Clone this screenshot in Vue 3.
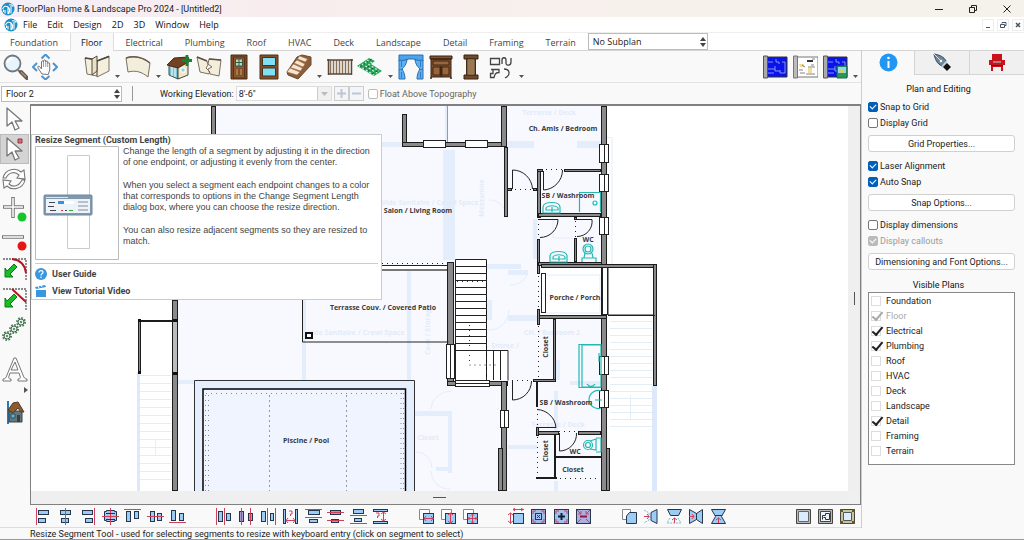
<script setup>
import { ref } from 'vue'

const menus = ['File', 'Edit', 'Design', '2D', '3D', 'Window', 'Help']
const tabs = ['Foundation', 'Floor', 'Electrical', 'Plumbing', 'Roof', 'HVAC', 'Deck', 'Landscape', 'Detail', 'Framing', 'Terrain']
const activeTab = ref('Floor')

const plans = ref([
  { name: 'Foundation', on: false },
  { name: 'Floor', on: true, disabled: true },
  { name: 'Electrical', on: true },
  { name: 'Plumbing', on: true },
  { name: 'Roof', on: false },
  { name: 'HVAC', on: false },
  { name: 'Deck', on: false },
  { name: 'Landscape', on: false },
  { name: 'Detail', on: true },
  { name: 'Framing', on: false },
  { name: 'Terrain', on: false },
])

const logo = '<circle cx="7" cy="7" r="6.5" fill="#1a8fc9"/><path d="M1.500 7C3 4 5 3.500 7 5S9 9 7.500 12M4 11.500V8M7 4.500v7.500M10 4v7.500M2.500 10V7.500M8 3c2-.8 3.500 0 4 1.500" fill="none" stroke="#fff" stroke-width="1.100"/>'

const sheet = '<path d="M4 3h21v20H4z" fill="#0a14e8" stroke="#333"/><path d="M1.500 2h4v22h-4z" fill="#aaa" stroke="#555"/>'
const sheetLines = '<path d="M6 8h5m3-3v3h3M6 15h7m0-3v5h5m-12 2h6m5-11v2m3-2h3v11h-5v-3" fill="none" stroke="#9db2ff" stroke-width=".8"/>'

const tools = [
  { n: 'Zoom', i: '<path d="M16 16l3 3" stroke="#777" stroke-width="2"/><path d="M19 18l6 6" stroke="#66594b" stroke-width="4" stroke-linecap="round"/><path d="M19 18l5 5" stroke="#a58f75" stroke-width="1.500"/><circle cx="10.500" cy="9.500" r="8" fill="#e8f4fd" stroke="#6e7880" stroke-width="1.800"/><path d="M5.500 9a5 5 0 0 1 5-4.500" stroke="#fff" stroke-width="2" fill="none"/>' },
  { n: 'Pan', i: '<path d="M9.500 4.500l4-4 4 4M9.500 22l4 3.500 4-3.500M5 9l-4 4 4 4M21 9l4 4-4 4" fill="none" stroke="#4f93cf" stroke-width="2"/><path d="M10 20l-4-6c-1-2 1-2.500 2-1l1.500 2V8c0-1.500 2-1.500 2 0V7c0-1.500 2.200-1.500 2.200 0v1c0-1.300 2-1.300 2 0v1.500c.5-1.300 2-1 2 .5v6l-1.500 4.500z" fill="#fff" stroke="#777"/><path d="M11.500 8v5m2.200-5v5m2-4v4" stroke="#888" stroke-width=".8"/>' },
  { gap: true },
  { n: 'Wall', arrow: true, i: '<path d="M1 4l12 2v16L3 20zM13 7l12-5v15l-12 6z" fill="#f5f0de" stroke="#7d7060"/><path d="M8 5l5-3v15l-5 4z" fill="#e8e0c8" stroke="#56483a"/><path d="M1 4l7 1M13 7l12-4.500" stroke="#4e4438" stroke-width="1.500"/>' },
  { n: 'Curved wall', arrow: true, i: '<path d="M1 4c9-3 18 0 24 5l-2 14c-6-5-12-7-20-5z" fill="#f3eedc" stroke="#7d7060"/><path d="M1 4c9-3 18 0 24 5" fill="none" stroke="#6a5c4e" stroke-width="1.500"/>' },
  { n: 'Room', i: '<path d="M3 11l9 2v12l-9-4z" fill="#7cc3d3" stroke="#355"/><path d="M12 13l10-5v13l-10 4z" fill="#f1e6c6" stroke="#444"/><path d="M1 11L8 4l14-1 2 4-12 7z" fill="#744222" stroke="#4e2810"/><path d="M6 13v9m3-8v9m6-9h4v4h-4z" fill="#8ed1e0" stroke="#fff"/><path d="M21 1v11M15.500 6.500h11" stroke="#138433" stroke-width="2.800"/>' },
  { n: 'Break wall', i: '<path d="M1 3l10 4 1 4-2 3 4 4-1 2L4 18zM13 5l12 1-2 16-9-2-2-5 4-2-4-3z" fill="#f3eedc" stroke="#7d7060"/><path d="M1 3l10 4m2-2l12 1" stroke="#5e5145" stroke-width="1.500"/>' },
  { n: 'Door', i: '<path d="M5 1h16v24H5z" fill="#7d4a25" stroke="#4a2a14"/><path d="M7.500 3h11v21h-11z" fill="#8d5930" stroke="#55331b"/><path d="M9.500 5h7v7h-7z" fill="#9bdceb" stroke="#453"/><path d="M13 5v7M9.500 8.500h7" stroke="#453"/><path d="M10 14.500h2v7h-2zM14 14.500h2v7h-2z" fill="#c99663" stroke="#5e3a1f" stroke-width=".6"/>' },
  { n: 'Window', i: '<path d="M4 1h18v24H4z" fill="#80502a" stroke="#4f2f18"/><path d="M6.500 3.500h13v8h-13zM6.500 14h13v8h-13z" fill="#7fdff5" stroke="#47301c"/>' },
  { n: 'Stairs', arrow: true, i: '<path d="M1 18L11 3l5-2 9 2v8L12 25 2 21z" fill="#8b5d38" stroke="#6b4a31"/><path d="M1 18l10 3 3-3-10-4zM4.500 13.500l10 3.500 2-3-9-4zM8 9l9 4 2-3-8-4zM11.500 5l8 3 2-3-8-3z" fill="#f8e4cf" stroke="#9a7250" stroke-width=".6"/>' },
  { n: 'Railing', i: '<path d="M3.500 6v14m3-14v14m3-14v14m3-14v14m3-14v14m3-14v14m3-14v14" stroke="#8a7257" stroke-width="1.500"/><path d="M0 6h26M1 20h24" stroke="#5a4939" stroke-width="1.500"/><path d="M1.500 5v16m23-16v16" stroke="#5a4939" stroke-width="1.500"/>' },
  { n: 'Deck', arrow: true, i: '<path d="M0 12L12 4l6 3-4 3 11 7-8 5z" fill="#27a45a"/><path d="M2 12l15 9M5 10l15 9M8 8l14 9M10 6l5 3" stroke="#d4f7df" stroke-width="1.200" stroke-dasharray="2 2"/><path d="M3 13l12-8m-8 10l7-4m-3 6l7-4m-3 7l7-4" stroke="#075d2e" stroke-dasharray="2 2"/>' },
  { n: 'Curtains', i: '<path d="M1 1h24v6c-4 2-7 1-9-2h-6c-2 3-5 4-9 2z" fill="#4aa5ee" stroke="#2a6fb0"/><path d="M1 6c4 1 7 0 8-1 0 5-3 8-5 10 2 3 3 6 3 10H1zM25 6c-4 1-7 0-8-1 0 5 3 8 5 10-2 3-3 6-3 10h6z" fill="#5db0f2" stroke="#2a6fb0"/><path d="M1 15.500h4m16 0h4M3.500 18v6m19-6v6M3.500 7v6m19-6v6" stroke="#2a6fb0" stroke-width=".8"/>' },
  { n: 'Cabinet', i: '<path d="M2 2h22v3H2zM3 5h20v18H3z" fill="#825231" stroke="#39200f"/><path d="M5 7h16v4H5zM5 13h7v8H5zM14 13h7v8h-7z" fill="#98653d" stroke="#412815"/><path d="M3 23v2m20-2v2M13 12v11" stroke="#39200f" stroke-width="1.500"/>' },
  { n: 'Column', i: '<path d="M6 1h14v4H6zM6 21h14v4H6z" fill="#6d4a2c" stroke="#38230f"/><path d="M8.500 5h9v16h-9z" fill="#80603d" stroke="#432b17"/><path d="M11 5v16m2-16v16m2-16v16" stroke="#c0a078" stroke-width=".8"/>' },
  { n: 'Shapes', arrow: true, i: '<path d="M2.500 4.500h9v6h-9zM3 15.500h8v3c-3 0-4 1-5 5H2.500v-4H5v-4M14 10V6c0-3 4-3 4 0v3c0 3 5 3 5-1V4M16 15c6 0 7 6 1 9" fill="none" stroke="#444" stroke-width="1.300"/>' },
  { spring: true },
  { n: 'Blueprint', i: sheet + sheetLines },
  { n: 'White print', i: '<path d="M4 3h22v20H4z" fill="#fff" stroke="#777"/><path d="M1.500 2h4v22h-4z" fill="#bbb" stroke="#777"/><path d="M7 10h5v3H8zM16 14h4v5h-4z" fill="#f0dc9b"/><path d="M15 6h6v2h-6z" fill="#333"/><path d="M7 16h4m-3 3h5m3-6h7m-9 7h9m-13-9l3 2m7-8h3m-4 6h3" fill="none" stroke="#666" stroke-width=".8"/>' },
  { n: 'Picture print', arrow: true, i: sheet + sheetLines + '<path d="M15 12h10v12H15z" fill="#2e9655" stroke="#186b58"/><path d="M16 13h8v6h-8z" fill="#90d8ed"/><circle cx="20" cy="17" r="2" fill="#e6d04b"/>' },
]

const cursor = '<path d="M6 2v18l5-4 3 8 4-2-4-7h7z" fill="#fff" stroke="#777" stroke-width="1.300" stroke-linejoin="round"/>'
const corner = '<path d="M2 3h23v21" fill="none" stroke="#888" stroke-width="1.800" stroke-dasharray="2 1"/>'
const green = '<path d="M16 11l-7 7 3 3H4v-9l2 3 7-7z" fill="#18bd27" stroke="#087b10"/>'
const gear = (x, y) => `<circle cx="${x}" cy="${y}" r="4" fill="none" stroke="#4a7a58" stroke-width="2" stroke-dasharray="1.600 1.500"/><circle cx="${x}" cy="${y}" r="3" fill="#e2efe5" stroke="#3f6d4d"/><circle cx="${x}" cy="${y}" r="1" fill="#3f6d4d"/>`
const sideTools = [
  { n: 'Select', i: cursor },
  { n: 'Resize Segment', on: true, i: cursor + '<path d="M17 3h4v4h-4z" fill="#c77" stroke="#934"/>' },
  { n: 'Rotate', i: '<path d="M2 12C4 3 15 1 20 6l3-2 1 9-8-1 2-3c-4-4-10-3-13 3zM24 14c-2 9-13 11-18 6l-3 2-1-8 8 1-2 3c4 4 10 2 13-4z" fill="#fff" stroke="#777" stroke-width="1.100"/>' },
  { n: 'Add point', i: '<path d="M12 1v21M2 11h21" stroke="#777" stroke-width="3.500"/><path d="M12 2v19M3 11h19" stroke="#fff" stroke-width="1.500"/><circle cx="21" cy="21" r="4.500" fill="#16c52b"/>' },
  { n: 'Remove point', i: '<path d="M1 11h22" stroke="#777" stroke-width="3.500"/><path d="M2 11h20" stroke="#fff" stroke-width="1.500"/><circle cx="21" cy="20" r="4.500" fill="#e91515"/>' },
  { n: 'Fillet', i: corner + green + '<path d="M11 3c9 1 13 6 14 14" fill="none" stroke="#b71524" stroke-width="2"/>' },
  { n: 'Chamfer', i: corner + green + '<path d="M11 3l14 13" stroke="#b71524" stroke-width="2"/>' },
  { n: 'Chain', i: gear(6, 20) + gear(13, 13) + gear(20, 6) },
  { n: 'Text', cls: 'apart', i: '<path d="M2 24v-2c2 0 3-1 4-4l7-17h2l7 17c1 3 2 4 4 4v2h-9v-2c2 0 3-1 2-3l-1-3H9l-1 3c-1 2 0 3 2 3v2zM10 13h7l-3-8z" fill="#fff" stroke="#777"/>' },
  { arrow: true },
  { n: 'House view', i: '<path d="M7 2v23" stroke="#2878bd" stroke-width="2"/><path d="M8 12h13v11H8z" fill="#65777e" stroke="#394349"/><path d="M7 11l5-7 5-1 6 10h-3l-3-4-5 5z" fill="#8b5c2c" stroke="#563a23"/><path d="M10 15h4v4h-4z" fill="#5cb4d7" stroke="#355"/><path d="M16 16h3v7h-3z" fill="#403e3a"/>' },
]

// Alignment bar glyphs: boxes are blue, guide lines are red.
const box = (...r) => r.map(([x, y, w, h, f]) => `<rect x="${x}.5" y="${y}.5" width="${w}" height="${h}" fill="${f || '#9ccbf6'}" stroke="#24364c"/>`).join('')
const line = (d) => `<path d="${d}" fill="none" stroke="#d0405a"/>`
const pale = '<path d="M1.500 1.500h10v10h-10z" fill="#fff" stroke="#888"/>'
const lilac = '#a49ad0'
const bars = [
  { n: 7, icons: [
    ['Align left', line('M1.500 0v17') + box([3, 2, 10, 4], [3, 10, 7, 4])],
    ['Align center', box([3, 2, 10, 4], [4, 10, 7, 4]) + line('M8.500 0v17')],
    ['Align right', line('M14.500 0v17') + box([2, 2, 10, 4], [5, 10, 7, 4])],
    ['Align middle both', '<path d="M4.500 3.500v-1h8v1h2v9h-2v1h-8v-1h-2v-9z" fill="#9ccbf6" stroke="#24364c"/>' + line('M8.500 0v17M0 8.500h17') + '<path d="M4 5.500h9M4 11.500h9" stroke="#24364c"/>'],
    ['Align top', line('M0 1.500h17') + box([2, 3, 4, 10], [10, 3, 4, 7])],
    ['Align middle', box([3, 3, 4, 10], [10, 5, 4, 7]) + line('M0 8.500h17')],
    ['Align bottom', line('M0 14.500h17') + box([2, 2, 4, 10], [10, 5, 4, 7])],
  ] },
  { n: 8, icons: [
    ['Space left', line('M1.500 0v17M9.500 0v17') + box([3, 3, 4, 10], [11, 5, 4, 7])],
    ['Space center', box([2, 3, 4, 10, lilac], [11, 5, 4, 7, lilac]) + line('M4.500 0v17M13.500 0v17')],
    ['Space right', line('M7.500 0v17M15.500 0v17') + box([1, 3, 4, 10], [10, 5, 3, 7])],
    ['Space by distance', box([1, 1, 2, 14], [13, 1, 2, 14]) + line('M4 12.500h9M6 10l-2 2.500 2 2.500M11 10l2 2.500-2 2.500M7 3h3v3H8.500v2')],
    ['Space top', line('M0 1.500h17M0 9.500h17') + box([3, 2, 11, 4], [4, 11, 8, 3])],
    ['Space middle', box([3, 2, 10, 4, lilac], [4, 11, 7, 3, lilac]) + line('M0 4.500h17M0 12.500h17')],
    ['Space bottom', line('M0 7.500h17M0 15.500h17') + box([3, 1, 10, 4], [4, 10, 7, 3])],
    ['Space by height', box([1, 1, 14, 2], [1, 13, 14, 2]) + line('M11.500 4v9M9 6l2.500-2L14 6M9 11l2.500 2 2.500-2M4 5h3v3H5.500v2')],
  ] },
  { n: 3, icons: [
    ['Match width', pale + box([5, 5, 10, 10]) + line('M6 10.500h10M8 8l-2 2.500L8 13M13 8l2 2.500-2 2.500')],
    ['Match height', pale + box([5, 5, 10, 10]) + line('M10.500 5v11M8 7l2.500-2L13 7M8 13l2.500 2 2.500-2')],
    ['Match both', pale + box([5, 5, 10, 10]) + line('M10.500 6v9M6 10.500h9M9 7.500L10.500 6 12 7.500M9 13.500l1.500 1.500 1.500-1.500M7.500 9L6 10.500 7.500 12M13.500 9l1.500 1.500-1.500 1.500')],
  ] },
  { n: 4, icons: [
    ['Set size', box([5, 5, 10, 10]) + line('M2.500 5v11M0 7l2.500-2L5 7M0 13l2.500 2L5 13M5 1.500h11M7 0L5 1.500 7 3M13 0l2 1.500L13 3')],
    ['Scale', box([1, 1, 14, 14, '#a4b9e8'], [5, 5, 6, 6]) + line('M3 6V3h3M11 3h3v3M3 11v3h3M14 11v3h-3') + '<path d="M7 7l3 3m0-3l-3 3" stroke="#24364c"/>'],
    ['Enlarge', box([1, 1, 14, 14, '#a4c0ee']) + line('M3 6V3h3M11 3h3v3M3 11v3h3M14 11v3h-3') + '<path d="M8.500 5v7M5 8.500h7" stroke="#123" stroke-width="2"/>'],
    ['Reduce', box([1, 1, 14, 14, '#b0aee0']) + line('M2 2l4 4M15 2l-4 4M2 15l4-4m9 4l-4-4M3 6h3V3M14 6h-3V3') + '<path d="M5 8.500h7" stroke="#802040" stroke-width="2"/>'],
  ] },
  { n: 5, icons: [
    ['Duplicate', '<path d="M1.500 1.500h8v10h-8z" fill="#fff" stroke="#888"/><path d="M5.500 8l3-3.500h7v11h-10z" fill="#9ccbf6" stroke="#24364c"/>'],
    ['Flip right', '<path d="M8 4.500l6-3v14l-6-3z" fill="#9ccbf6" stroke="#24364c"/><path d="M1 2l5 3v7l-5 3" fill="none" stroke="#69bce4" stroke-dasharray="2 1"/>' + line('M1 8.500h5M4 6l2 2.500L4 11')],
    ['Flip up', '<path d="M1.500 1.500h14l-3 6h-8z" fill="#9ccbf6" stroke="#24364c"/><path d="M4 10l-3 5h14l-3-5" fill="none" stroke="#69bce4" stroke-dasharray="2 1"/>' + line('M8.500 15v-5M6 12l2.500-2 2.500 2')],
    ['Mirror horizontal', '<path d="M1.500 1.500l7 4 6-4v14l-6-4-7 4z" fill="#9ccbf6" stroke="#24364c"/><path d="M8.500 5v7" stroke="#24364c"/>' + line('M1 8.500h5M4 6l2 2.500L4 11')],
    ['Mirror vertical', '<path d="M1.500 1.500h14l-4 7 4 7h-14l4-7z" fill="#9ccbf6" stroke="#24364c"/><path d="M5 7.500h7" stroke="#24364c"/>' + line('M8.500 15v-5M6 12l2.500-2 2.500 2')],
  ] },
  { n: 3, right: true, icons: [
    ['Fit window', '<path d="M1.500 1.500h14v14h-14z" fill="#bbb" stroke="#444"/><path d="M3.500 3.500h10v10h-10z" fill="#dcecff" stroke="#666"/>'],
    ['Fit plan', '<path d="M1.500 1.500h14v14h-14z" fill="#bbb" stroke="#444"/><path d="M3.500 3.500h10v10h-10z" fill="#eef4fc" stroke="#444"/><path d="M5.500 11.500v-4h3v-2h4v6h-4v-2h-2" fill="none" stroke="#333"/>'],
    ['Fit selection', '<path d="M1.500 1.500h14v14h-14z" fill="#c8c49c" stroke="#444"/><path d="M4.500 4.500h8v8h-8z" fill="#dcecff" stroke="#555"/><path d="M1 1h3v3H1zM13 1h3v3h-3zM1 13h3v3H1zM13 13h3v3h-3z" fill="#5c592c"/>'],
  ] },
]

// Plan geometry: x, y, width, height.
const bands = [
  [380, 142, 23, 5], [507, 141, 27, 7], [577, 141, 24, 7], [443, 150, 12, 110], [178, 380, 16, 4],
  [302, 300, 4, 80], [407, 270, 4, 110], [414, 411, 37, 5], [448, 411, 4, 62], [436, 467, 14, 4],
  [487, 264, 34, 5], [508, 270, 20, 5], [533, 219, 4, 40], [508, 315, 30, 6], [508, 445, 29, 4],
  [554, 391, 4, 40], [554, 481, 4, 10], [570, 381, 31, 4], [445, 106, 3, 36], [484, 300, 8, 20], [555, 360, 5, 20],
]
const walls = [
  [211, 106, 5, 30], [402, 114, 5, 33], [402, 142, 105, 5], [501, 106, 6, 41], [504, 147, 4, 70],
  [601, 106, 6, 385], [537, 169, 4, 49], [537, 169, 6, 3], [564, 169, 37, 3], [507, 188, 5, 3], [533, 188, 4, 3],
  [538, 213, 63, 4], [537, 239, 3, 35], [574, 238, 3, 24], [574, 217, 3, 3], [538, 262, 64, 4],
  [541, 264, 116, 4], [653, 264, 4, 122], [538, 315, 69, 4], [537, 309, 3, 16], [447, 262, 7, 124],
  [447, 381, 61, 5], [501, 381, 6, 110], [498, 448, 5, 43], [553, 319, 3, 62], [533, 379, 23, 3],
  [536, 381, 2, 26], [537, 431, 22, 4], [578, 431, 23, 4], [536, 427, 3, 9], [554, 435, 2, 43], [536, 477, 21, 2],
  [556, 456, 46, 2], [172, 300, 6, 191], [606, 448, 4, 43], [139, 320, 34, 2], [138, 320, 3, 52],
]
const openings = [
  [423, 140, 23, 8], [465, 140, 23, 8], [599, 144, 10, 19], [599, 174, 10, 18], [599, 217, 10, 18],
  [599, 356, 10, 19], [599, 390, 10, 18], [446, 344, 9, 35], [455, 380, 35, 7], [500, 410, 9, 18],
  [541, 273, 5, 40], [602, 267, 6, 48],
]
const labels = [
  [563, 131, 'Ch. Amis / Bedroom'], [418, 213, 'Salon / Living Room'], [568, 198, 'SB / Washroom'],
  [588, 242, 'WC'], [575, 300, 'Porche / Porch'], [383, 310, 'Terrasse Couv. / Covered Patio'],
  [306, 443, 'Piscine / Pool'], [566, 405, 'SB / Washroom'], [575, 454, 'WC'], [573, 472, 'Closet'],
]
const ghosts = [
  [549, 115, 'Terrasse / Deck'], [430, 205, 'Vide Sanitaire / Crawl Space'], [356, 335, 'Vide Sanitaire / Crawl Space'],
  [428, 440, 'Closet'], [552, 335, 'CH. / Bedroom 2'], [558, 427, 'Terrasse / Deck'], [505, 348, 'Entree /'], [306, 453, 'Piscine / Pool Excavation'],
]
const treads = Array.from({ length: 13 }, (_, i) => 266 + i * 7)
const paleTreads = Array.from({ length: 16 }, (_, i) => 321 + i * 7)
const leftTreads = Array.from({ length: 14 }, (_, i) => 375 + i * 8)
</script>

<template>
  <div class="app">
    <header class="title">
      <svg class="logo" width="14" height="14" v-html="logo"></svg>
      <h1>FloorPlan Home &amp; Landscape Pro 2024 - [Untitled2]</h1>
      <div class="win">
        <button aria-label="Minimize"><svg width="10" height="10"><path d="M1 5.500h8" stroke="#222" /></svg></button>
        <button aria-label="Restore"><svg width="10" height="10"><path d="M1.500 3.500h5v5h-5zM3.500 3V1.500h5v5H7" fill="none" stroke="#222" /></svg></button>
        <button aria-label="Close"><svg width="10" height="10"><path d="M1.500 1.500l7 7m0-7l-7 7" stroke="#222" /></svg></button>
      </div>
    </header>

    <nav class="menu" aria-label="Main menu">
      <svg class="logo" width="14" height="14" v-html="logo"></svg>
      <button v-for="m in menus" :key="m">{{ m }}</button>
      <div class="mdi">
        <button aria-label="Minimize document"><svg width="8" height="8"><path d="M2 6.500h4" stroke="#456" /></svg></button>
        <button aria-label="Restore document"><svg width="8" height="8"><path d="M1.500 3.500h4v3h-4zM3 2.500v-1h4v3H6" fill="none" stroke="#456" /></svg></button>
        <button aria-label="Close document"><svg width="8" height="8"><path d="M2 2l4 4m0-4L2 6" stroke="#456" stroke-width="1.500" /></svg></button>
      </div>
    </nav>

    <div class="tabs">
      <button v-for="t in tabs" :key="t" :class="{ active: t === activeTab }" @click="activeTab = t">{{ t }}</button>
      <span class="select subplan">
        <select aria-label="Subplan"><option>No Subplan</option></select>
        <svg width="6" height="10"><path d="M0 4l3-4 3 4zM0 6l3 4 3-4z" fill="#444" /></svg>
      </span>
    </div>

    <div class="work">
      <div class="toolbar">
        <template v-for="(t, k) in tools" :key="k">
          <span v-if="t.gap" class="gap"></span>
          <span v-else-if="t.spring" class="spring"></span>
          <template v-else>
            <button class="tool" :aria-label="t.n"><svg width="26" height="26" v-html="t.i"></svg></button>
            <button v-if="t.arrow" class="more" :aria-label="t.n + ' options'"><svg width="5" height="3"><path d="M0 0h5L2.500 3z" fill="#555" /></svg></button>
          </template>
        </template>
      </div>

      <div class="options">
        <span class="select floor">
          <select aria-label="Floor"><option>Floor 2</option></select>
          <svg width="6" height="10"><path d="M0 4l3-4 3 4zM0 6l3 4 3-4z" fill="#444" /></svg>
        </span>
        <i class="rule"></i>
        <label for="elev" class="elev">Working Elevation:</label>
        <span class="combo">
          <input id="elev" type="text" value="8'-6&quot;" />
          <button aria-label="Elevation list"><svg width="7" height="4"><path d="M0 0h7L3.500 4z" fill="#bbb" /></svg></button>
        </span>
        <span class="steps">
          <button aria-label="Raise"><svg width="11" height="11"><path d="M5.500 1v9M1 5.500h9" stroke="#bcc6d4" stroke-width="2" /></svg></button>
          <button aria-label="Lower"><svg width="11" height="11"><path d="M1 5.500h9" stroke="#bcc6d4" stroke-width="2" /></svg></button>
        </span>
        <label class="check float"><input type="checkbox" />Float Above Topography</label>
      </div>

      <div class="stage">
        <div class="side-tools">
          <template v-for="(t, k) in sideTools" :key="k">
            <span v-if="t.arrow" class="side-more"><svg width="4" height="6"><path d="M0 0l4 3-4 3z" fill="#555" /></svg></span>
            <button v-else :class="[{ on: t.on }, t.cls]" :aria-label="t.n"><svg width="27" height="26" v-html="t.i"></svg></button>
          </template>
        </div>

        <main class="view">
          <div class="canvas">
            <svg class="plan" width="100%" height="100%" role="img" aria-label="Floor plan">
              <g transform="translate(-31 -106)">
                <path d="M214 106h388v385H176V300h38z" fill="#f8f9ff" />
                <path d="M541 267h113v48H541z" fill="#fff" />
                <rect v-for="(r, k) in bands" :key="'b' + k" :x="r[0]" :y="r[1]" :width="r[2]" :height="r[3]" fill="#e3edfc" />
                <path d="M652 386h5v105h-5zM137 372h3v119h-3z" fill="#dbe9fb" />
                <path v-for="y in paleTreads" :key="'p' + y" :d="`M610 ${y}.500h42`" stroke="#e2edf5" />
                <path v-for="y in leftTreads" :key="'l' + y" :d="`M140 ${y}.500h31`" stroke="#e2edf5" />
                <path d="M607 137.500h5v130M630.500 395v24M155.500 440v16M489 200a18 18 0 0 1 18 18M431 409a20 20 0 0 1 20-18M416 452a16 16 0 0 1 16 16M431 471a18 18 0 0 0 20 18M487 330a20 20 0 0 0 22-20M510 285a18 18 0 0 0 18-12M545 275h55v38h-55M553 220v18h20" fill="none" stroke="#e3edfc" />
                <text v-for="(g, k) in ghosts" :key="'g' + k" class="ghost" :x="g[0]" :y="g[1]">{{ g[2] }}</text>
                <text class="ghost" transform="translate(430 330) rotate(-90)">Cave / Storage</text>
                <text class="ghost" transform="translate(484 198) rotate(-90)">Mezzanine</text>

                <!-- pool -->
                <path d="M194.500 491V380.500h220V491" fill="none" stroke="#333" />
                <path d="M195 491V381h219v110h-9V389H203v102z" fill="#e5eefc" />
                <path d="M203 491V389h202.500v102" fill="#f0f4ff" stroke="#000" stroke-width="1.500" />
                <path d="M206 393.500h197M205.500 395v96M208.500 395v96M401 393v98M403.500 393v98" fill="none" stroke="#8288a0" stroke-dasharray="1 4" />
                <path d="M269.500 395v96M346.500 395v96" stroke="#999" stroke-dasharray="2 3" />

                <rect v-for="(r, k) in walls" :key="'w' + k" :x="r[0] + 0.5" :y="r[1] + 0.5" :width="r[2] - 1" :height="r[3] - 1" fill="#8a8a8a" stroke="#1c1c1c" />
                <path d="M173 322h4v50h-4z" fill="#bbb" />
                <path d="M138 319h3v3h-3zM138 371h3v3h-3zM173 319h5v3h-5zM173 372h5v3h-5z" fill="#111" />
                <rect v-for="(r, k) in openings" :key="'o' + k" :x="r[0] + 0.5" :y="r[1] + 0.5" :width="r[2] - 1" :height="r[3] - 1" fill="#fff" stroke="#222" />
                <path d="M447.500 106v36" stroke="#7f9dc8" />
                <path d="M604.500 144v19M604.500 174v18M604.500 217v18M604.500 356v19M604.500 390v18M450.500 344v35M455 383.500h35M504.500 410v18" stroke="#222" />

                <!-- stairs -->
                <path d="M455 259h31v91h22v30h-53z" fill="#fff" />
                <path d="M455.500 380V259.500h31V380M486 350.500h22v30M455 350.500h31M493.500 350v30M500.500 350v30" fill="none" stroke="#222" />
                <path v-for="y in treads" :key="'t' + y" :d="`M455 ${y}.500h31`" stroke="#222" />
                <path d="M486.500 262v118" stroke="#111" stroke-dasharray="3 4" />
                <path d="M469.500 325v40h30M457 281.500h28" fill="none" stroke="#333" stroke-dasharray="1 4" />

                <!-- patio and porch -->
                <path d="M382 266h65v4h-65z" fill="#fff" />
                <path d="M302.500 300v42h146M382 265.500h65M608 268v47h46M655 315.500h-47" fill="none" stroke="#222" />
                <path d="M382 270h65" stroke="#777" stroke-width="2" />
                <path d="M306 333h6v5h-6z" fill="#fff" stroke="#111" stroke-width="2" />
                <path d="M382 263.500h66M425 147.500h20M467 147.500h20M515 189.500h18M546 169.500h18M538.500 219v20M575.500 221v17M538.500 276v34M538.500 326v52M512 380.500h20M537.500 409v18M537.500 437v40M560 478.500h40M559 431.500h18" stroke="#222" stroke-dasharray="1 4" />
                <path d="M512.500 189v-19a20 20 0 0 1 20 19M543.500 171v19a20 20 0 0 0 19-20M539 219.500h19a18 18 0 0 1-18 18M577 219.500h15a15 15 0 0 1-15 17M512.500 381v19a19 19 0 0 0 19-19M537 409.500a20 20 0 0 1 19 18h-18M559.500 433v18a17 17 0 0 0 17-18" fill="none" stroke="#222" />

                <!-- fixtures -->
                <g fill="none" stroke="#21b9b2" stroke-width="1.200">
                  <path d="M543 213v-6c0-6 17-6 17 0v6zM546 210v-2c2-3 10-3 12 0v2zM552 207v5M550 262v-6c0-6 17-6 17 0v6zM553 259v-2c2-3 10-3 12 0v2zM559 256v5" />
                  <path d="M579 192.500h22M579.500 192v20M600.500 192v20M582 345h19v42h-19zM579 344.500h22v43h-22zM582 353v9M599 353v9M587 384c2 3 6 3 8 0" />
                  <circle cx="595" cy="203" r="2" /><circle cx="588" cy="249" r="5" /><circle cx="588" cy="249" r="3" />
                  <path d="M582 262v-4h14v4M585 253l-1 5h9l-1-5M601 391a9 9 0 1 0 0 17M595 400h7M596 438h5v14h-5M590 441l6-2v11l-6-1" />
                  <circle cx="588" cy="445" r="4.500" /><circle cx="588" cy="445" r="2.500" />
                </g>

                <text v-for="(l, k) in labels" :key="'t' + k" class="room" :x="l[0]" :y="l[1]">{{ l[2] }}</text>
                <text class="room" transform="translate(548 347) rotate(-90)">Closet</text>
                <text class="room" transform="translate(548 451) rotate(-90)">Closet</text>
              </g>
            </svg>
          </div>
          <div class="vbar"><i></i></div>
          <div class="hbar"><i></i></div>

          <aside class="tip">
            <h2>Resize Segment (Custom Length)</h2>
            <div class="tip-body">
              <svg class="thumb" width="84" height="114">
                <path d="M.5.500h83v113H.5z" fill="#fff" stroke="#bbb" />
                <path d="M32.500 9.500h22v93h-22z" fill="none" stroke="#ccc" />
                <rect x="9" y="49" width="48" height="20" rx="1" fill="#8199ae" stroke="#71899e" />
                <path d="M11 53h44v14H11z" fill="#eef3f8" />
                <path d="M11 51.500h22" stroke="#dce5ed" /><path d="M23 55h6v3h-6z" fill="#3d8de0" />
                <path d="M29 55h10v3H29z" fill="#fff" /><path d="M43 55h10v2H43zM43 59h10v2H43zM43 63h10v2H43z" fill="#b5c1cd" />
                <path d="M14 56.500h6M13 60.500h6M15 64.500h6M30 64.500h2" stroke="#445" /><path d="M26 64h2v1h-2z" fill="#d33" /><path d="M34 64h4v1h-4z" fill="#3a3" />
              </svg>
              <div class="copy">
                <p>Change the length of a segment by adjusting it in the direction<br />of one endpoint, or adjusting it evenly from the center.</p>
                <p>When you select a segment each endpoint changes to a color<br />that corresponds to options in the Change Segment Length<br />dialog box, where you can choose the resize direction.</p>
                <p>You can also resize adjacent segments so they are resized to<br />match.</p>
              </div>
            </div>
            <hr />
            <a href="#"><svg width="12" height="12"><circle cx="6" cy="6" r="6" fill="#3a96dd" /><path d="M4 4.500c0-2.500 4-2.500 4 0 0 1.500-2 1.200-2 3M6 8.500v1.500" fill="none" stroke="#fff" stroke-width="1.200" /></svg>User Guide</a>
            <a href="#"><svg width="12" height="12"><path d="M1 5h10v7H1zM0 2l10-2 1 2-10 2z" fill="#3a96dd" /><path d="M3 1l1 2m2-3l1 2M3 4.500h1m3 0h1" stroke="#fff" /></svg>View Tutorial Video</a>
          </aside>
        </main>
      </div>

      <div class="align">
        <div v-for="(b, k) in bars" :key="k" :class="['group', 'n' + b.n, { right: b.right }]">
          <button v-for="i in b.icons" :key="i[0]" :aria-label="i[0]"><svg width="17" height="17" v-html="i[1]"></svg></button>
        </div>
      </div>
    </div>

    <section class="panel">
      <div class="ptabs">
        <button class="active" aria-label="Information"><svg width="19" height="19"><circle cx="9.500" cy="9.500" r="9" fill="#2196f3" /><path d="M9.500 8v7" stroke="#fff" stroke-width="2" /><circle cx="9.500" cy="5" r="1.300" fill="#fff" /></svg></button>
        <button aria-label="Pen"><svg width="19" height="19"><path d="M1 1c6 1 10 3 12 7l-4 5C4 11 2 6 1 1z" fill="#6d8799" stroke="#344b5c" /><path d="M1 1l7 7" stroke="#dde" /><circle cx="8" cy="8" r="1.200" fill="#fff" /><path d="M14 8l-5 6" stroke="#b9d2e2" stroke-width="2" /><path d="M14 10l4 4-4 4-4-4z" fill="#111" /></svg></button>
        <button aria-label="Furniture"><svg width="18" height="19"><path d="M4 1h10v7H4z" fill="#c9121c" /><path d="M1 7h4v3h8V7h4v5h-2v6h-2v-4H5v4H3v-6H1z" fill="#c9121c" /><path d="M5 9h8M3 12.500h12" stroke="#6d0710" /></svg></button>
      </div>
      <h2>Plan and Editing</h2>
      <div class="checks">
        <label class="check"><input type="checkbox" checked />Snap to Grid</label>
        <label class="check"><input type="checkbox" />Display Grid</label>
      </div>
      <button class="push">Grid Properties...</button>
      <div class="checks">
        <label class="check"><input type="checkbox" checked />Laser Alignment</label>
        <label class="check"><input type="checkbox" checked />Auto Snap</label>
      </div>
      <button class="push">Snap Options...</button>
      <div class="checks">
        <label class="check"><input type="checkbox" />Display dimensions</label>
        <label class="check off"><input type="checkbox" checked disabled />Display callouts</label>
      </div>
      <button class="push">Dimensioning and Font Options...</button>
      <h2 class="vis">Visible Plans</h2>
      <div class="list">
        <label v-for="p in plans" :key="p.name" :class="{ off: p.disabled }"><input v-model="p.on" type="checkbox" :disabled="p.disabled" />{{ p.name }}</label>
      </div>
    </section>

    <footer class="status">Resize Segment Tool - used for selecting segments to resize with keyboard entry (click on segment to select)</footer>
  </div>
</template>

<style>
html, body { margin: 0; background: #f9f9f9; }
</style>

<style scoped>
* { box-sizing: border-box; }
.app { display: grid; grid-template-columns: minmax(0, 1fr) 163px; grid-template-rows: 17px 15px 19px minmax(0, 1fr) 12px; height: 100vh; font: 9px/12px "Open Sans", "Noto Sans", sans-serif; color: #222; background: #f9f9f9; }
.title, .options, .panel, .tip, .status { font-family: Roboto, "Open Sans", sans-serif; }
button { padding: 0; border: 0; background: none; font: inherit; color: inherit; display: flex; align-items: center; justify-content: center; }
svg { display: block; flex: none; }
h1, h2, p { margin: 0; font: inherit; }
.title, .menu, .tabs, .status { grid-column: 1 / -1; display: flex; align-items: center; }
.title { background: linear-gradient(90deg, #f3f0f8, #f8ecee 25%, #f7f1ec 60%, #f5f1eb); padding-left: 1px; }
.title h1 { margin-left: 2px; }
.win { margin-left: auto; display: flex; }
.win button { width: 34px; height: 17px; }
.menu { background: #fff; padding-left: 4px; }
.menu > button { padding: 0 5px; color: #111; }
.mdi { margin-left: auto; display: flex; gap: 3px; }
.mdi button { width: 12px; height: 12px; border: 1px solid #eee; }
.tabs { background: #fff; border-top: 1px solid #eee; border-bottom: 1px solid #d5d5d5; color: #444; }
.tabs > button { align-self: stretch; padding: 2px 11px 0 10px; margin-right: 1px; }
.tabs > button.active { margin-bottom: -1px; background: #f9f9f9; border-left: 1px solid #ddd; border-right: 1px solid #ddd; color: #111; }
.select { position: relative; display: block; }
.select select { appearance: none; width: 100%; height: 100%; padding: 0 4px; font: inherit; color: #222; background: #fff; border: 1px solid #bbb; border-radius: 0; }
.select svg { position: absolute; right: 2px; top: 50%; margin-top: -5px; pointer-events: none; }
.subplan { width: 120px; height: 17px; }
.work { display: grid; grid-template-rows: 31px 22px minmax(0, 1fr) 23px; min-width: 0; }
.toolbar { display: flex; align-items: center; }
.tool { width: 30px; height: 30px; }
.more { width: 11px; height: 30px; padding-top: 20px; }
.gap { width: 22px; }
.spring { margin-left: auto; }
.options { display: flex; align-items: center; border-top: 1px solid #e4e4e4; padding-left: 1px; }
.floor { width: 121px; height: 16px; }
.rule { width: 1px; height: 15px; background: #999; margin: 0 27px 0 10px; }
.elev { min-width: 72px; }
.combo { display: flex; width: 96px; height: 15px; margin-left: 2px; border: 1px solid #ddd; }
.combo input { flex: 1; min-width: 0; padding: 0 2px; border: 0; background: #fff; font: inherit; color: #222; }
.combo button { width: 14px; background: #f0f0f0; border-left: 1px solid #ccc; }
.steps { display: flex; margin: 0 4px 0 2px; }
.steps button { width: 15px; height: 15px; border: 1px solid #ccc; background: #f4f5f8; }
.check { display: flex; align-items: center; gap: 2px; }
.float { color: #666; }
.check input { appearance: none; width: 10px; height: 10px; margin: 0; border: 1px solid #777; border-radius: 2px; background: #fff; display: grid; place-items: center; }
.float input { border-color: #bbb; }
.check input:checked { background: #005fb8; border-color: #005fb8; }
.check input:checked::after { content: ""; width: 5px; height: 3px; border: solid #fff; border-width: 0 0 1px 1px; transform: rotate(-45deg); margin-bottom: 2px; }
.check.off { color: #999; }
.check.off input:checked { background: #bbb; border-color: #bbb; }
.stage { display: grid; grid-template-columns: 30px minmax(0, 1fr); min-height: 0; }
.side-tools { display: flex; flex-direction: column; }
.side-tools button { width: 29px; height: 30px; flex: none; }
.side-tools button.on { background: #d4d4d4; border: 1px solid #bbb; }
.side-tools .apart { margin-top: 11px; }
.side-more { height: 12px; padding: 2px 0 0 24px; }
.view { position: relative; display: grid; grid-template: minmax(0, 1fr) 13px / minmax(0, 1fr) 12px; border: solid #808080; border-width: 2px 1px 1px; background: #f0f0f0; }
.canvas { background: #fff; overflow: hidden; }
.plan { width: 100%; height: 100%; }
.vbar, .hbar { display: flex; align-items: center; justify-content: center; background: #efefef; }
.vbar i { width: 1px; height: 13px; background: #555; }
.hbar i { width: 13px; height: 1px; background: #555; }
.room, .ghost { font: bold 7px "Open Sans", "Noto Sans", sans-serif; text-anchor: middle; fill: #3a3a3a; }
.ghost { fill: #e3ebf8; }
.tip { position: absolute; left: 0; top: 28px; width: 351px; height: 166px; padding: 0 3px; background: #fff; border: 1px solid #ccc; color: #444; }
.tip h2 { font-weight: bold; line-height: 11px; }
.tip-body { display: flex; gap: 4px; height: 117px; }
.copy { font: 9px/11px "Liberation Sans", Arial, sans-serif; white-space: nowrap; }
.copy p { margin-bottom: 12px; }
.tip hr { margin: 0 0 1px; border: 0; border-top: 1px solid #ccc; }
.tip a { display: flex; align-items: center; gap: 5px; height: 17px; color: #444; font-weight: bold; text-decoration: none; }
.align { display: flex; align-items: center; gap: 23px; padding: 0 2px 0 32px; border-bottom: 1px solid #ddd; }
.group { display: flex; }
.group button { flex: 1; }
.n7 { width: 157px; }
.n8 { width: 180px; }
.n3 { width: 67px; }
.n4 { width: 90px; }
.n5 { width: 112px; }
.right { margin-left: auto; }
.panel { border-left: 1px solid #ccc; padding-right: 9px; display: flex; flex-direction: column; }
.ptabs { display: grid; grid-template-columns: 52px 1fr 1fr; height: 24px; margin-right: -9px; }
.ptabs button { border: solid #d5d5d5; border-width: 0 0 1px 1px; background: #f0f0f0; }
.ptabs button.active { border-color: transparent; background: none; }
.panel h2 { text-align: center; margin-top: 8px; color: #111; }
.checks { display: flex; flex-direction: column; gap: 4px; margin: 6px 0 6px 6px; }
.push + .checks { margin-top: 8px; }
.push { height: 17px; margin-left: 6px; border: 1px solid #d0d0d0; border-radius: 3px; background: #fff; flex: none; }
.panel .vis { margin-top: 9px; }
.list { margin: 1px 0 0 6px; padding: 0 2px 6px; border: 1px solid #888; background: #fff; }
.list label { display: flex; align-items: center; gap: 5px; height: 15px; }
.list input { appearance: none; width: 10px; height: 10px; margin: 0; border: 1px solid #ddd; background: #fff; display: grid; place-items: center; }
.list input:checked::after { content: ""; width: 9px; height: 4px; border: solid #222; border-width: 0 0 2px 2px; transform: rotate(-50deg); margin-bottom: 1px; }
.list .off { color: #aaa; }
.list .off input:checked::after { border-color: #aaa; }
.status { padding-left: 30px; border-bottom: 1px solid #999; white-space: nowrap; }
</style>
